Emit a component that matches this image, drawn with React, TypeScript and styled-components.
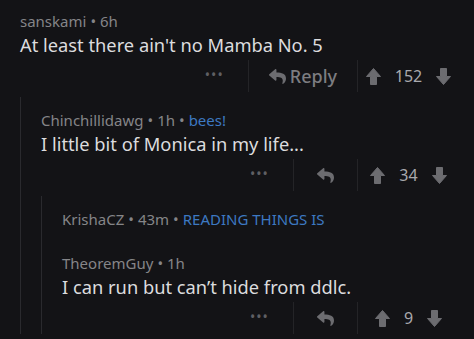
import React, { FunctionComponent, ReactNode } from 'react'
import styled, { createGlobalStyle } from 'styled-components'
import { FaReply } from 'react-icons/fa'

const GlobalStyle = createGlobalStyle`
  html, body {
    margin: 0;
    padding: 0;
    background: #131316;
  }
  body {
    font-family: 'Noto Sans', 'Open Sans', sans-serif;
    -webkit-font-smoothing: antialiased;
  }
`

const Page = styled.div`
  width: 474px;
  height: 339px;
  overflow: hidden;
  box-sizing: border-box;
  padding: 11px 15px 0 20px;
  background: #131316;
`

const CommentBlock = styled.div<{ $top: number; $bottom?: number }>`
  padding-top: ${p => p.$top}px;
  padding-bottom: ${p => p.$bottom || 0}px;
`

const Meta = styled.div`
  font-size: 15px;
  line-height: 20px;
  color: #858588;
  white-space: nowrap;
`

const Dot = styled.span`
  margin: 0 4px;
`

const Flair = styled.span<{ $caps?: boolean }>`
  color: #3d79c2;
  text-transform: ${p => (p.$caps ? 'uppercase' : 'none')};
`

const Body = styled.div`
  margin-top: 2px;
  font-size: 18.3px;
  line-height: 24px;
  color: #dcdcde;
  white-space: nowrap;
`

// Row of actions under each comment, pinned to the right
const Actions = styled.div`
  margin-top: 3px;
  display: flex;
  justify-content: flex-end;
  height: 32px;
`

const Cell = styled.div<{ $width?: number; $divider?: boolean }>`
  display: flex;
  align-items: center;
  justify-content: center;
  box-sizing: border-box;
  ${p => (p.$width ? `width: ${p.$width}px;` : 'padding: 0 20px; min-width: 64px;')}
  border-left: ${p => (p.$divider ? '1px solid #242427' : 'none')};
  color: #6c6c70;
  gap: 4px;
`

const MoreDots = styled.span`
  font-size: 14px;
  letter-spacing: 1px;
  color: #5f5f63;
  line-height: 1;
  transform: translateY(-1px);
`

const ReplyLabel = styled.span`
  font-size: 18px;
  font-weight: 500;
  color: #7d7d81;
`

const Score = styled.span`
  font-size: 16px;
  color: #a9a9ad;
  margin: 0 10px;
`

// Indented children with the thread line on the left
const Thread = styled.div`
  margin-top: 5px;
  border-left: 1px solid #2a2a2e;
  padding-left: 20px;
`

const Arrow: FunctionComponent<{ down?: boolean }> = ({ down }) => (
  <svg width='15' height='17' viewBox='0 0 15 17' style={{ transform: down ? 'rotate(180deg)' : undefined }}>
    <path d='M7.5 0.5 L14.5 8.5 L10.5 8.5 L10.5 16.5 L4.5 16.5 L4.5 8.5 L0.5 8.5 Z' fill='#6c6c70' strokeLinejoin='round' stroke='#6c6c70' strokeWidth='1' />
  </svg>
)

interface CommentProps {
  author: string
  age: string
  flair?: string
  caps?: boolean
  text?: string
  score?: number
  replyText?: boolean
  top: number
  bottom?: number
  children?: ReactNode
}

const Comment: FunctionComponent<CommentProps> = ({ author, age, flair, caps, text, score, replyText, top, bottom, children }) => (
  <CommentBlock $top={top} $bottom={bottom}>
    <Meta>
      {author}<Dot>•</Dot>{age}
      {flair && <><Dot>•</Dot><Flair $caps={caps}>{flair}</Flair></>}
    </Meta>
    {text && <>
      <Body>{text}</Body>
      <Actions>
        <Cell $width={67}><MoreDots>•••</MoreDots></Cell>
        <Cell $divider>
          <FaReply size={17} />
          {replyText && <ReplyLabel>Reply</ReplyLabel>}
        </Cell>
        <Cell $width={102} $divider>
          <Arrow />
          <Score>{score}</Score>
          <Arrow down />
        </Cell>
      </Actions>
    </>}
    {children && <Thread>{children}</Thread>}
  </CommentBlock>
)

const App: FunctionComponent = () => <>
  <GlobalStyle />
  <Page>
    <Comment author='sanskami' age='6h' text="At least there ain't no Mamba No. 5" score={152} replyText top={0}>
      <Comment author='Chinchillidawg' age='1h' flair='bees!' text='I little bit of Monica in my life...' score={34} top={13}>
        <Comment author='KrishaCZ' age='43m' flair='Reading things is' caps top={13} bottom={6} />
        <Comment author='TheoremGuy' age='1h' text='I can run but can’t hide from ddlc.' score={9} top={18} />
      </Comment>
    </Comment>
  </Page>
</>

export default App
